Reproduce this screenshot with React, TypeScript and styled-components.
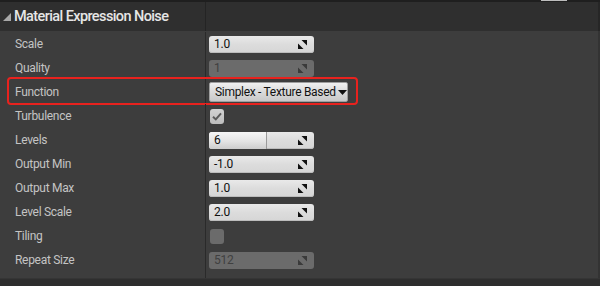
import React from "react";
import styled, { createGlobalStyle, css } from "styled-components";

const Global = createGlobalStyle`
  html, body { margin: 0; padding: 0; background: #3d3d3d; }
  body { font-family: Roboto, "Noto Sans", "DejaVu Sans", sans-serif; }
`;

const Panel = styled.div`
  width: 600px;
  height: 286px;
  background: #3d3d3d;
  display: flex;
  flex-direction: column;
  overflow: hidden;
  position: relative;
`;

const TopStrip = styled.div`
  height: 2px;
  background: #1f1f1f;
  display: flex;
  justify-content: flex-end;
  padding-right: 33px;
`;

const ScrollThumb = styled.div`
  width: 26px;
  height: 1px;
  background: #bdbdbd;
`;

const Header = styled.div`
  height: 29px;
  background: #2f2f2f;
  display: grid;
  grid-template-columns: 205px 1fr;
`;

const HeaderTitle = styled.div`
  display: flex;
  align-items: center;
  gap: 3px;
  padding-left: 3px;
  color: #e6e6e6;
  font-size: 14.5px;
  font-weight: 500;
  letter-spacing: -0.6px;
  white-space: nowrap;
`;

const HeaderRest = styled.div`
  border-left: 1px solid #242424;
  border-right: 2px solid #262626;
`;

const Body = styled.div`
  flex: 1;
  display: flex;
  flex-direction: column;
  padding-top: 1px;
  border-right: 2px solid #333;
`;

const Row = styled.div`
  height: 24px;
  display: grid;
  grid-template-columns: 205px 1fr;
  position: relative;
`;

const Label = styled.div`
  display: flex;
  align-items: center;
  padding-left: 15px;
  color: #c4c4c4;
  font-size: 12px;
  letter-spacing: -0.3px;
  white-space: nowrap;
`;

const ValueCell = styled.div`
  border-left: 1px solid #2a2a2a;
  display: flex;
  align-items: center;
  padding-left: 3px;
`;

const Filler = styled.div`
  flex: 1;
  display: grid;
  grid-template-columns: 205px 1fr;
  & > div:last-child { border-left: 1px solid #2a2a2a; }
`;

const Footer = styled.div`
  height: 7px;
  background: #2e2e2e;
  border-top: 1px solid #353535;
`;

const NumBox = styled.div<{ $disabled?: boolean }>`
  width: 105px;
  height: 17px;
  box-sizing: border-box;
  border-radius: 3px;
  display: flex;
  align-items: center;
  justify-content: space-between;
  padding: 0 7px 0 5px;
  font-size: 12px;
  letter-spacing: -0.2px;
  position: relative;
  overflow: hidden;
  ${(p) =>
    p.$disabled
      ? css`
          background: #6b6b6b;
          color: #404040;
        `
      : css`
          background: linear-gradient(#e9e9e9, #dcdcdc 50%, #d6d6d6);
          color: #101010;
          box-shadow: inset 0 -1px 0 #bcbcbc;
        `}
`;

const SliderFill = styled.div`
  position: absolute;
  left: 0;
  top: 0;
  bottom: 0;
  background: linear-gradient(#f6f6f6, #e4e4e4 55%, #cdcdcd);
  border-right: 1px solid #9a9a9a;
`;

const BoxText = styled.span`
  position: relative;
`;

const Dropdown = styled.div`
  width: 139px;
  height: 20px;
  box-sizing: border-box;
  border-radius: 2px;
  background: linear-gradient(#f0f0f0, #dadada 50%, #c9c9c9);
  border: 1px solid #9e9e9e;
  display: flex;
  align-items: center;
  gap: 2px;
  padding-left: 5px;
  color: #111;
  font-size: 12px;
  letter-spacing: -0.3px;
  white-space: nowrap;
`;

const Highlight = styled.div`
  position: absolute;
  left: 7px;
  top: -3px;
  width: 351px;
  height: 28px;
  box-sizing: border-box;
  border: 2.5px solid #e8221e;
  border-radius: 4px;
  pointer-events: none;
`;

const Check = styled.div<{ $on?: boolean }>`
  width: 14px;
  height: 15px;
  margin-left: 1px;
  border-radius: 3px;
  background: ${(p) => (p.$on ? "linear-gradient(#d2d2d2, #bdbdbd)" : "#6b6b6b")};
  display: flex;
  align-items: center;
  justify-content: center;
`;

const Spin = ({ color }: { color: string }) => (
  <svg width="9" height="9" viewBox="0 0 9 9" style={{ position: "relative" }}>
    <polygon points="3.5,0 9,0 9,5.5" fill={color} />
    <polygon points="0,3.5 0,9 5.5,9" fill={color} />
  </svg>
);

type Field =
  | { kind: "num"; label: string; value: string; disabled?: boolean; fill?: number }
  | { kind: "check"; label: string; on: boolean }
  | { kind: "drop"; label: string; value: string; highlight?: boolean };

const fields: Field[] = [
  { kind: "num", label: "Scale", value: "1.0" },
  { kind: "num", label: "Quality", value: "1", disabled: true },
  { kind: "drop", label: "Function", value: "Simplex - Texture Based", highlight: true },
  { kind: "check", label: "Turbulence", on: true },
  { kind: "num", label: "Levels", value: "6", fill: 57 },
  { kind: "num", label: "Output Min", value: "-1.0" },
  { kind: "num", label: "Output Max", value: "1.0" },
  { kind: "num", label: "Level Scale", value: "2.0" },
  { kind: "check", label: "Tiling", on: false },
  { kind: "num", label: "Repeat Size", value: "512", disabled: true },
];

function renderValue(f: Field) {
  if (f.kind === "check") {
    return (
      <Check $on={f.on}>
        {f.on && (
          <svg width="10" height="9" viewBox="0 0 10 9">
            <path d="M1 4.8 L3.8 7.4 L9 1.4" stroke="#5a5a5a" strokeWidth="2" fill="none" />
          </svg>
        )}
      </Check>
    );
  }
  if (f.kind === "drop") {
    return (
      <Dropdown>
        <span>{f.value}</span>
        <svg width="9" height="5" viewBox="0 0 9 5">
          <polygon points="0,0 9,0 4.5,5" fill="#111" />
        </svg>
      </Dropdown>
    );
  }
  return (
    <NumBox $disabled={f.disabled}>
      {f.fill !== undefined && <SliderFill style={{ width: f.fill }} />}
      <BoxText>{f.value}</BoxText>
      <Spin color={f.disabled ? "#3a3a3a" : "#111"} />
    </NumBox>
  );
}

export default function App() {
  return (
    <>
      <Global />
      <Panel>
        <TopStrip>
          <ScrollThumb />
        </TopStrip>
        <Header>
          <HeaderTitle>
            <svg width="8" height="8" viewBox="0 0 8 8">
              <polygon points="8,0 8,8 0,8" fill="#a8a8a8" />
            </svg>
            <span>Material Expression Noise</span>
          </HeaderTitle>
          <HeaderRest />
        </Header>
        <Body>
          {fields.map((f) => (
            <Row key={f.label}>
              <Label>{f.label}</Label>
              <ValueCell>{renderValue(f)}</ValueCell>
              {f.kind === "drop" && f.highlight && <Highlight />}
            </Row>
          ))}
          <Filler>
            <div />
            <div />
          </Filler>
        </Body>
        <Footer />
      </Panel>
    </>
  );
}
